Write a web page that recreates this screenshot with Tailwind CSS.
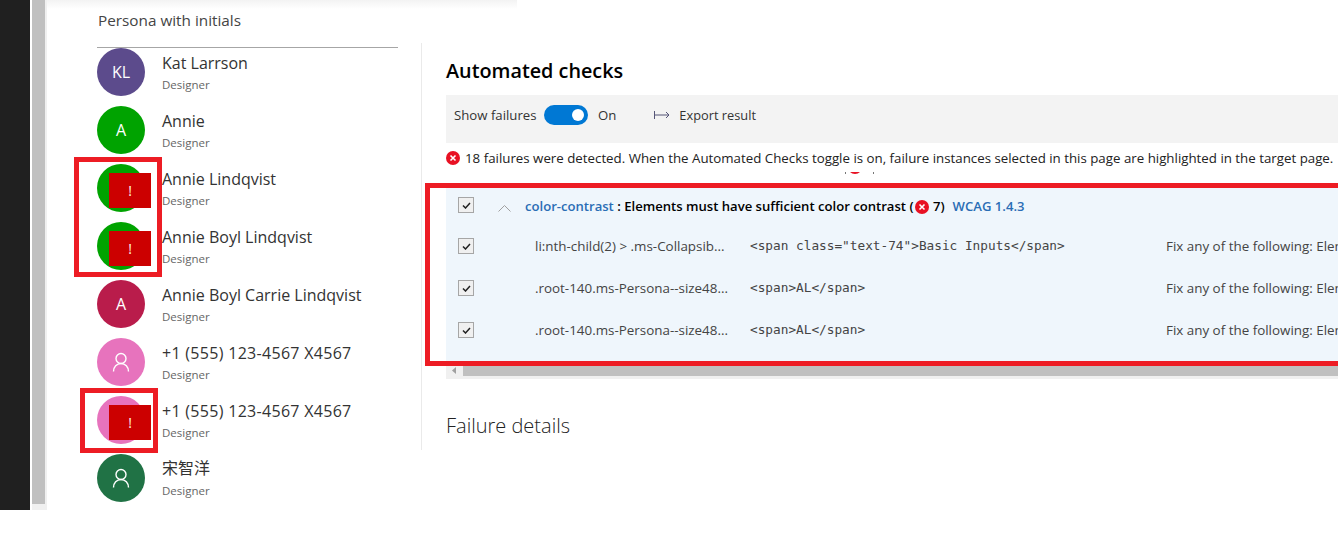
<!DOCTYPE html>
<html>
<head>
<meta charset="utf-8">
<script src="https://cdn.jsdelivr.net/npm/@tailwindcss/browser@4"></script>
</head>
<body class="relative w-[1338px] h-[558px] overflow-hidden bg-white text-[#333333] font-['Open_Sans','Noto_Sans_CJK_SC',sans-serif]">
<div class="flex h-[510px] overflow-hidden">
  <div class="w-[30px] shrink-0 bg-[#202020]"></div>
  <div class="w-[17px] shrink-0 pl-[2px] bg-white"><div class="h-full bg-[#f0f0f0]"><div class="w-[13px] h-[504px] bg-[#c0c0c0]"></div></div></div>
  <div class="flex flex-1 min-w-0 relative">
    <div class="absolute left-0 top-0 w-[470px] h-[9px] bg-linear-to-b from-[#f3f3f3] to-white"></div>
    <div class="ml-[50px] w-[301px] shrink-0">
      <div class="h-[48px] border-b border-[#a6a6a6] pt-[8px] text-[15.3px] leading-[24px] text-[#444444] pl-px relative">Persona with initials</div>
      <div class="flex flex-col gap-[10px]">
        <div class="flex h-[48px] gap-[17px]"><div class="w-[48px] h-[48px] shrink-0 rounded-full flex items-center justify-center bg-[#5c4b8c] text-white text-[16px]">KL</div><div><div class="text-[16px] leading-[22px] mt-[4px]">Kat Larrson</div><div class="text-[11.5px] leading-[16px] mt-[3px] text-[#666666]">Designer</div></div></div>
        <div class="flex h-[48px] gap-[17px]"><div class="w-[48px] h-[48px] shrink-0 rounded-full flex items-center justify-center bg-[#00a300] text-white text-[16px]">A</div><div><div class="text-[16px] leading-[22px] mt-[4px]">Annie</div><div class="text-[11.5px] leading-[16px] mt-[3px] text-[#666666]">Designer</div></div></div>
        <div class="flex h-[48px] gap-[17px]"><div class="w-[48px] h-[48px] shrink-0 rounded-full flex items-center justify-center bg-[#00a300] text-white text-[16px]">AL</div><div><div class="text-[16px] leading-[22px] mt-[4px]">Annie Lindqvist</div><div class="text-[11.5px] leading-[16px] mt-[3px] text-[#666666]">Designer</div></div></div>
        <div class="flex h-[48px] gap-[17px]"><div class="w-[48px] h-[48px] shrink-0 rounded-full flex items-center justify-center bg-[#00a300] text-white text-[16px]">AL</div><div><div class="text-[16px] leading-[22px] mt-[4px]">Annie Boyl Lindqvist</div><div class="text-[11.5px] leading-[16px] mt-[3px] text-[#666666]">Designer</div></div></div>
        <div class="flex h-[48px] gap-[17px]"><div class="w-[48px] h-[48px] shrink-0 rounded-full flex items-center justify-center bg-[#b91c4b] text-white text-[16px]">A</div><div><div class="text-[16px] leading-[22px] mt-[4px]">Annie Boyl Carrie Lindqvist</div><div class="text-[11.5px] leading-[16px] mt-[3px] text-[#666666]">Designer</div></div></div>
        <div class="flex h-[48px] gap-[17px]"><div class="w-[48px] h-[48px] shrink-0 rounded-full flex items-center justify-center bg-[#e773bd] text-white"><svg width="18" height="20" viewBox="0 0 18 20" fill="none" stroke="currentColor" stroke-width="1.4"><circle cx="9" cy="6.5" r="5"/><path d="M1.5 19.5c0-4.5 3.2-8 7.5-8s7.5 3.500 7.500 8"/></svg></div><div><div class="text-[16px] leading-[22px] mt-[4px] tracking-[0.3px]">+1 (555) 123-4567 X4567</div><div class="text-[11.5px] leading-[16px] mt-[3px] text-[#666666]">Designer</div></div></div>
        <div class="flex h-[48px] gap-[17px]"><div class="w-[48px] h-[48px] shrink-0 rounded-full flex items-center justify-center bg-[#e773bd] text-white"><svg width="18" height="20" viewBox="0 0 18 20" fill="none" stroke="currentColor" stroke-width="1.4"><circle cx="9" cy="6.500" r="5"/><path d="M1.5 19.5c0-4.5 3.2-8 7.5-8s7.5 3.500 7.500 8"/></svg></div><div><div class="text-[16px] leading-[22px] mt-[4px] tracking-[0.3px]">+1 (555) 123-4567 X4567</div><div class="text-[11.5px] leading-[16px] mt-[3px] text-[#666666]">Designer</div></div></div>
        <div class="flex h-[48px] gap-[17px]"><div class="w-[48px] h-[48px] shrink-0 rounded-full flex items-center justify-center bg-[#207245] text-white"><svg width="18" height="20" viewBox="0 0 18 20" fill="none" stroke="currentColor" stroke-width="1.4"><circle cx="9" cy="6.500" r="5"/><path d="M1.5 19.5c0-4.5 3.2-8 7.5-8s7.5 3.500 7.500 8"/></svg></div><div><div class="text-[16px] leading-[22px] mt-[3px]">宋智洋</div><div class="text-[11.5px] leading-[16px] mt-[4px] text-[#666666]">Designer</div></div></div>
      </div>
    </div>
    <div class="ml-[23px] mt-[43px] h-[407px] flex-1 min-w-0 border-l border-[#eaeaea] pl-[24px] overflow-hidden">
      <div class="h-[52px] pt-[4px] flex items-center text-[19.8px] font-semibold text-black">Automated checks</div>
      <div class="h-[48px] bg-[#f3f3f3] flex items-center pl-[8px] pb-[8px] text-[13.2px] whitespace-nowrap">
        <span class="mt-[2px] w-[82px]">Show failures</span>
        <span class="ml-[8px] w-[44px] h-[20px] rounded-full bg-[#0078d4] flex items-center justify-end pr-[4px]"><span class="w-[12px] h-[12px] rounded-full bg-white"></span></span>
        <span class="ml-[10px] mt-[2px]">On</span>
        <svg class="ml-[38px]" width="16" height="8" viewBox="0 0 16 8" fill="none" stroke="#555577" stroke-width="1"><path d="M.5 0v8M1 4h14M12 1l3 3-3 3"/></svg>
        <span class="ml-[9px] mt-[2px] text-[12.8px]">Export result</span>
      </div>
      <div class="h-[30px] flex items-center gap-[5px] text-[13.3px] whitespace-nowrap text-[#222222]">
        <svg class="shrink-0" width="14" height="14" viewBox="0 0 14 14"><circle cx="7" cy="7" r="7" fill="#e81123"/><path d="M4.500 4.500l5 5M9.500 4.500l-5 5" stroke="#fff" stroke-width="1.600"/></svg>
        <span class="mt-[2px]">18 failures were detected. When the Automated Checks toggle is on, failure instances selected in this page are highlighted in the target page.</span>
      </div>
      <div class="h-[15px] pl-[399px]"><svg class="block -mt-px" width="30" height="3" viewBox="0 0 30 3"><path d="M5 0h10q-2 2-5 2t-5-2z" fill="#e81123"/><rect x="0" y="0" width="1" height="2" fill="#777777"/><rect x="28" y="0" width="1" height="2" fill="#777777"/></svg></div>
      <div class="h-[178px] bg-[#eff6fc] whitespace-nowrap">
        <div class="h-[38px] pb-[2px] flex items-center pl-[12px] text-[13.1px] font-semibold text-black">
          <span class="w-[16px] h-[16px] shrink-0 border border-[#a6a6a6] bg-[#f0f0f0] flex items-center justify-center"><svg width="9" height="7" viewBox="0 0 9 7" fill="none" stroke="#222" stroke-width="1.500"><path d="M1 3.500l2.500 2.500 4.500-5"/></svg></span>
          <svg class="ml-[24px] mt-[6px]" width="13" height="7" viewBox="0 0 13 7" fill="none" stroke="#a0a0a0" stroke-width="1"><path d="M.5 6.500l6-6 6 6"/></svg>
          <span class="ml-[14px] mt-[4px] text-[#2a6db5]">color-contrast</span>
          <span class="mt-[4px]">&nbsp;: Elements must have sufficient color contrast (</span>
          <svg class="mx-px mt-[4px]" width="14" height="14" viewBox="0 0 14 14"><circle cx="7" cy="7" r="7" fill="#e81123"/><path d="M4.500 4.500l5 5M9.500 4.500l-5 5" stroke="#fff" stroke-width="1.600"/></svg>
          <span class="mt-[4px]">&nbsp;7)</span>
          <span class="ml-[8px] mt-[4px] text-[#2a6db5]">WCAG 1.4.3</span>
        </div>
        <div class="h-[42px] flex items-center pl-[12px] text-[13.4px] text-[#444444]">
          <span class="w-[16px] h-[16px] shrink-0 border border-[#a6a6a6] bg-[#f0f0f0] flex items-center justify-center"><svg width="9" height="7" viewBox="0 0 9 7" fill="none" stroke="#222" stroke-width="1.500"><path d="M1 3.500l2.500 2.500 4.500-5"/></svg></span>
          <span class="ml-[61px] w-[215px] shrink-0 mt-[1px]">li:nth-child(2) &gt; .ms-Collapsib...</span>
          <span class="w-[416px] shrink-0 text-[12.750px] font-['DejaVu_Sans_Mono',monospace]">&lt;span class="text-74"&gt;Basic Inputs&lt;/span&gt;</span>
          <span class="mt-[1px]">Fix any of the following: Element has insufficient color contrast</span>
        </div>
        <div class="h-[42px] flex items-center pl-[12px] text-[13.4px] text-[#444444]">
          <span class="w-[16px] h-[16px] shrink-0 border border-[#a6a6a6] bg-[#f0f0f0] flex items-center justify-center"><svg width="9" height="7" viewBox="0 0 9 7" fill="none" stroke="#222" stroke-width="1.500"><path d="M1 3.500l2.500 2.500 4.500-5"/></svg></span>
          <span class="ml-[61px] w-[215px] shrink-0 mt-[1px]">.root-140.ms-Persona--size48...</span>
          <span class="w-[416px] shrink-0 text-[12.750px] font-['DejaVu_Sans_Mono',monospace]">&lt;span&gt;AL&lt;/span&gt;</span>
          <span class="mt-[1px]">Fix any of the following: Element has insufficient color contrast</span>
        </div>
        <div class="h-[42px] flex items-center pl-[12px] text-[13.4px] text-[#444444]">
          <span class="w-[16px] h-[16px] shrink-0 border border-[#a6a6a6] bg-[#f0f0f0] flex items-center justify-center"><svg width="9" height="7" viewBox="0 0 9 7" fill="none" stroke="#222" stroke-width="1.500"><path d="M1 3.500l2.500 2.500 4.500-5"/></svg></span>
          <span class="ml-[61px] w-[215px] shrink-0 mt-[1px]">.root-140.ms-Persona--size48...</span>
          <span class="w-[416px] shrink-0 text-[12.750px] font-['DejaVu_Sans_Mono',monospace]">&lt;span&gt;AL&lt;/span&gt;</span>
          <span class="mt-[1px]">Fix any of the following: Element has insufficient color contrast</span>
        </div>
      </div>
      <div class="h-[14px] bg-[#f0f0f0]"><div class="h-[11px] flex"><div class="w-[17px] flex items-center justify-center"><svg width="5" height="7" viewBox="0 0 5 7"><path d="M4 0v7L0 3.500z" fill="#a0a0a0"/></svg></div><div class="flex-1 bg-[#c0c0c0]"></div></div></div>
      <div class="mt-[33px] text-[20px] leading-[28px] font-light text-[#222222]">Failure details</div>
    </div>
  </div>
</div>

<div class="absolute left-[425px] top-[183px] w-[940px] h-[183px] border-[5px] border-[#ed1c24]"></div>
<div class="absolute left-[74px] top-[157px] w-[88px] h-[120px] border-[5px] border-[#ed1c24]"></div>
<div class="absolute left-[80px] top-[388px] w-[78px] h-[65px] border-[5px] border-[#ed1c24]"></div>
<div class="absolute left-[109px] top-[173px] w-[42px] h-[35px] bg-[#cc0000] text-[#fff4e6] text-[14px] flex items-center justify-center">!</div>
<div class="absolute left-[109px] top-[231px] w-[42px] h-[35px] bg-[#cc0000] text-[#fff4e6] text-[14px] flex items-center justify-center">!</div>
<div class="absolute left-[109px] top-[405px] w-[42px] h-[35px] bg-[#cc0000] text-[#fff4e6] text-[14px] flex items-center justify-center">!</div>
</body>
</html>
